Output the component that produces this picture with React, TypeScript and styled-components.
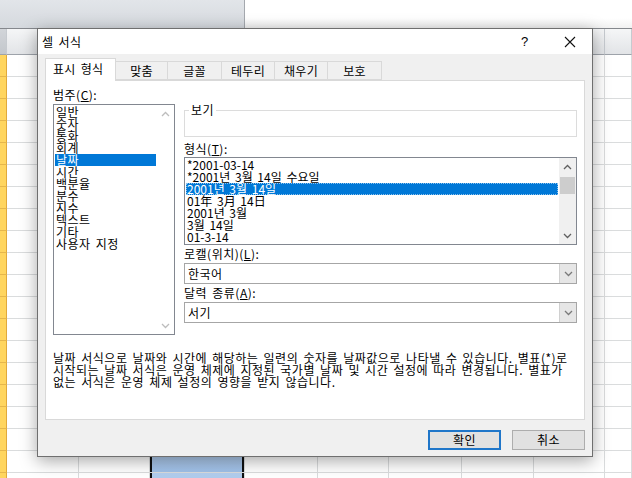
import React from "react";
import styled, { createGlobalStyle } from "styled-components";

const GlobalStyle = createGlobalStyle`
  html, body {
    margin: 0;
    padding: 0;
    background: #fff;
  }
  body {
    font-family: "Noto Sans CJK KR", "Noto Sans", sans-serif;
    font-size: 12px;
    color: #000;
  }
  * {
    box-sizing: border-box;
  }
`;

const Screen = styled.div`
  position: relative;
  width: 632px;
  height: 478px;
  overflow: hidden;
  background: #fff;
`;

const TopBar = styled.div`
  display: flex;
  height: 29px;
  border-bottom: 1px solid #85888d;
`;
const NameArea = styled.div`
  width: 245px;
  background: linear-gradient(#e2e5e9, #d5d9de);
  border-right: 1px solid #a4a8ae;
`;
const FormulaArea = styled.div`
  flex: 1;
  background: linear-gradient(#fff 65%, #f1f1f1);
`;

const Sheet = styled.div`
  display: grid;
  grid-template-columns: 7px 72px 71px 95px 73px 71px 73px 72px 71px 1fr;
  grid-template-rows: 26px;
  grid-auto-rows: 22px;
`;

type CellKind = "corner" | "colHead" | "rowHead" | "cell" | "sel";

const Cell = styled.div<{ $kind: CellKind }>`
  border-right: 1px solid
    ${p => (p.$kind === "colHead" || p.$kind === "corner" ? "#c6cacf" : p.$kind === "rowHead" ? "#e0a93c" : "#dadcdd")};
  border-bottom: 1px solid
    ${p => (p.$kind === "colHead" || p.$kind === "corner" ? "#9ea3aa" : p.$kind === "rowHead" ? "#e6b64b" : "#dadcdd")};
  background: ${p =>
    p.$kind === "corner"
      ? "linear-gradient(#d2d5d9, #c3c7cc)"
      : p.$kind === "colHead"
      ? "linear-gradient(#f5f6f7, #e2e4e7)"
      : p.$kind === "rowHead"
      ? "#ffd55e"
      : p.$kind === "sel"
      ? "linear-gradient(#b4cfee, #9fc0e8)"
      : "#fff"};
  box-shadow: ${p => (p.$kind === "sel" ? "inset 2px 0 0 #111, inset -2px 0 0 #111" : "none")};
`;

const Dialog = styled.div`
  position: absolute;
  left: 37px;
  top: 28px;
  width: 556px;
  height: 429px;
  display: flex;
  flex-direction: column;
  background: #f0f0f0;
  border: 1px solid #6f6f6f;
  box-shadow: 0 4px 16px rgba(0, 0, 0, 0.35);
`;

const TitleBar = styled.div`
  height: 25px;
  display: flex;
  align-items: center;
  padding-left: 4px;
  background: #fff;
`;
const Title = styled.span`
  flex: 1;
  font-size: 12px;
  line-height: 14px;
  letter-spacing: 0.4px;
  word-spacing: 2px;
`;
const TitleButton = styled.div`
  width: 45px;
  height: 25px;
  display: flex;
  align-items: center;
  justify-content: center;
  font-family: "Liberation Sans", sans-serif;
  font-size: 13px;
`;

const Body = styled.div`
  flex: 1;
  display: flex;
  flex-direction: column;
  padding: 4px 7px 0 7px;
`;

const TabStrip = styled.div`
  display: flex;
  align-items: flex-end;
  height: 22px;
  position: relative;
  z-index: 1;
`;
const Tab = styled.div<{ $active?: boolean; $w: number }>`
  width: ${p => p.$w}px;
  height: ${p => (p.$active ? 23 : 19)}px;
  margin-bottom: ${p => (p.$active ? -1 : 0)}px;
  margin-left: -1px;
  &:first-child {
    margin-left: 0;
  }
  display: flex;
  align-items: center;
  justify-content: ${p => (p.$active ? "flex-start" : "center")};
  padding-left: ${p => (p.$active ? 7 : 0)}px;
  padding-bottom: ${p => (p.$active ? 2 : 0)}px;
  background: ${p => (p.$active ? "#fff" : "#f0f0f0")};
  border: 1px solid #d9d9d9;
  border-bottom: ${p => (p.$active ? "none" : "1px solid #d9d9d9")};
  line-height: 14px;
  letter-spacing: 0.3px;
  word-spacing: 2px;
  white-space: nowrap;
`;

const Panel = styled.div`
  width: 540px;
  height: 340px;
  background: #fff;
  border: 1px solid #d9d9d9;
  padding: 7px 7px 0 7px;
`;

const Columns = styled.div`
  display: flex;
  gap: 9px;
`;
const LeftCol = styled.div`
  width: 122px;
  display: flex;
  flex-direction: column;
`;
const RightCol = styled.div`
  width: 393px;
  display: flex;
  flex-direction: column;
`;

const Label = styled.div<{ $mt?: number; $mb?: number }>`
  line-height: 14px;
  height: 14px;
  margin-top: ${p => p.$mt ?? 0}px;
  margin-bottom: ${p => p.$mb ?? 0}px;
  white-space: nowrap;
  letter-spacing: 0.5px;
  word-spacing: 2px;
`;

const GroupBox = styled.div`
  position: relative;
  margin-top: 22px;
  height: 27px;
  border: 1px solid #dcdcdc;
`;
const GroupLabel = styled.span`
  position: absolute;
  top: -8px;
  left: 4px;
  padding: 0 2px;
  background: #fff;
  line-height: 14px;
  letter-spacing: 0.5px;
`;

const ListBox = styled.div<{ $h: number; $mt?: number }>`
  height: ${p => p.$h}px;
  margin-top: ${p => p.$mt ?? 0}px;
  display: flex;
  background: #fff;
  border: 1px solid #828790;
`;
const Items = styled.div`
  flex: 1;
  padding: 1px;
  overflow: hidden;
`;
const Item = styled.div<{ $selected?: boolean; $focus?: boolean; $spacing?: number }>`
  height: 12px;
  line-height: 12px;
  padding-left: 1px;
  white-space: nowrap;
  letter-spacing: ${p => p.$spacing ?? 0}px;
  word-spacing: 2px;
  background: ${p => (p.$selected ? "#0078d7" : "transparent")};
  color: ${p => (p.$selected ? "#fff" : "#000")};
  outline: ${p => (p.$focus ? "1px dotted rgba(255,255,255,0.55)" : "none")};
  outline-offset: -1px;
`;

const ScrollBar = styled.div<{ $enabled?: boolean }>`
  width: 17px;
  display: flex;
  flex-direction: column;
  background: ${p => (p.$enabled ? "#f0f0f0" : "#fff")};
`;
const ArrowBtn = styled.div`
  height: 17px;
  display: flex;
  align-items: center;
  justify-content: center;
`;
const Track = styled.div`
  flex: 1;
  padding: 2px 1px 0 1px;
`;
const Thumb = styled.div`
  height: 17px;
  background: #cdcdcd;
`;

const Combo = styled.div`
  height: 21px;
  margin-top: 2px;
  display: flex;
  background: #fff;
  border: 1px solid #a6a6a6;
`;
const ComboValue = styled.div`
  flex: 1;
  padding-left: 3px;
  line-height: 19px;
  letter-spacing: 0.5px;
`;
const DropBtn = styled.div`
  width: 17px;
  display: flex;
  align-items: center;
  justify-content: center;
  background: #e6e6e6;
  border-left: 1px solid #d0d0d0;
`;

const Description = styled.p`
  margin: 17px 0 0 0;
  line-height: 11.8px;
  white-space: nowrap;
  letter-spacing: 0.5px;
  word-spacing: 2px;
`;

const Footer = styled.div`
  display: flex;
  justify-content: flex-end;
  gap: 11px;
  margin-top: 10px;
`;
const Button = styled.div<{ $primary?: boolean }>`
  width: 73px;
  height: 20px;
  display: flex;
  align-items: center;
  justify-content: center;
  background: #e1e1e1;
  border: ${p => (p.$primary ? "2px solid #1f76c9" : "1px solid #adadad")};
  line-height: 14px;
  letter-spacing: 0.5px;
`;

function Chevron({ up, color }: { up?: boolean; color: string }) {
  return (
    <svg width="9" height="6" viewBox="0 0 9 6">
      <polyline
        points={up ? "1,5 4.5,1.5 8,5" : "1,1 4.5,4.5 8,1"}
        fill="none"
        stroke={color}
        strokeWidth="1.3"
      />
    </svg>
  );
}

const colKinds = (row: number, col: number): CellKind => {
  if (row === 0) return col === 0 ? "corner" : "colHead";
  if (col === 0) return "rowHead";
  if (col === 3) return "sel";
  return "cell";
};

const tabs = [
  { label: "표시 형식", w: 71 },
  { label: "맞춤", w: 53 },
  { label: "글꼴", w: 55 },
  { label: "테두리", w: 54 },
  { label: "채우기", w: 54 },
  { label: "보호", w: 55 },
];

const categories = ["일반", "숫자", "통화", "회계", "날짜", "시간", "백분율", "분수", "지수", "텍스트", "기타", "사용자 지정"];

const formats = [
  "*2001-03-14",
  "*2001년 3월 14일 수요일",
  "2001년 3월 14일",
  "01年 3月 14日",
  "2001년 3월",
  "3월 14일",
  "01-3-14",
];

export default function App() {
  const rows = Array.from({ length: 21 }, (_, r) => r);
  const cols = Array.from({ length: 10 }, (_, c) => c);

  return (
    <Screen>
      <GlobalStyle />
      <TopBar>
        <NameArea />
        <FormulaArea />
      </TopBar>
      <Sheet>
        {rows.map(r => cols.map(c => <Cell key={`${r}-${c}`} $kind={colKinds(r, c)} />))}
      </Sheet>

      <Dialog>
        <TitleBar>
          <Title>셀 서식</Title>
          <TitleButton>?</TitleButton>
          <TitleButton>
            <svg width="12" height="12" viewBox="0 0 12 12">
              <path d="M1 1 L11 11 M11 1 L1 11" stroke="#111" strokeWidth="1.1" />
            </svg>
          </TitleButton>
        </TitleBar>

        <Body>
          <TabStrip>
            {tabs.map((t, i) => (
              <Tab key={t.label} $w={t.w} $active={i === 0}>
                {t.label}
              </Tab>
            ))}
          </TabStrip>

          <Panel>
            <Columns>
              <LeftCol>
                <Label $mb={2}>
                  범주(<u>C</u>):
                </Label>
                <ListBox $h={231}>
                  <Items>
                    {categories.map(c => (
                      <Item key={c} $selected={c === "날짜"} $spacing={0.5}>
                        {c}
                      </Item>
                    ))}
                  </Items>
                  <ScrollBar>
                    <ArrowBtn>
                      <Chevron up color="#bdbdbd" />
                    </ArrowBtn>
                    <Track />
                    <ArrowBtn>
                      <Chevron color="#bdbdbd" />
                    </ArrowBtn>
                  </ScrollBar>
                </ListBox>
              </LeftCol>

              <RightCol>
                <GroupBox>
                  <GroupLabel>보기</GroupLabel>
                </GroupBox>
                <Label $mt={5}>
                  형식(<u>T</u>):
                </Label>
                <ListBox $h={88} $mt={1}>
                  <Items>
                    {formats.map((f, i) => (
                      <Item key={f} $selected={i === 2} $focus={i === 2}>
                        {f}
                      </Item>
                    ))}
                  </Items>
                  <ScrollBar $enabled>
                    <ArrowBtn>
                      <Chevron up color="#606060" />
                    </ArrowBtn>
                    <Track>
                      <Thumb />
                    </Track>
                    <ArrowBtn>
                      <Chevron color="#606060" />
                    </ArrowBtn>
                  </ScrollBar>
                </ListBox>
                <Label $mt={2}>
                  로캘(위치)(<u>L</u>):
                </Label>
                <Combo>
                  <ComboValue>한국어</ComboValue>
                  <DropBtn>
                    <Chevron color="#7a7a7a" />
                  </DropBtn>
                </Combo>
                <Label $mt={2}>
                  달력 종류(<u>A</u>):
                </Label>
                <Combo>
                  <ComboValue>서기</ComboValue>
                  <DropBtn>
                    <Chevron color="#7a7a7a" />
                  </DropBtn>
                </Combo>
              </RightCol>
            </Columns>

            <Description>
              날짜 서식으로 날짜와 시간에 해당하는 일련의 숫자를 날짜값으로 나타낼 수 있습니다. 별표(*)로
              <br />
              시작되는 날짜 서식은 운영 체제에 지정된 국가별 날짜 및 시간 설정에 따라 변경됩니다. 별표가
              <br />
              없는 서식은 운영 체제 설정의 영향을 받지 않습니다.
            </Description>
          </Panel>

          <Footer>
            <Button $primary>확인</Button>
            <Button>취소</Button>
          </Footer>
        </Body>
      </Dialog>
    </Screen>
  );
}
